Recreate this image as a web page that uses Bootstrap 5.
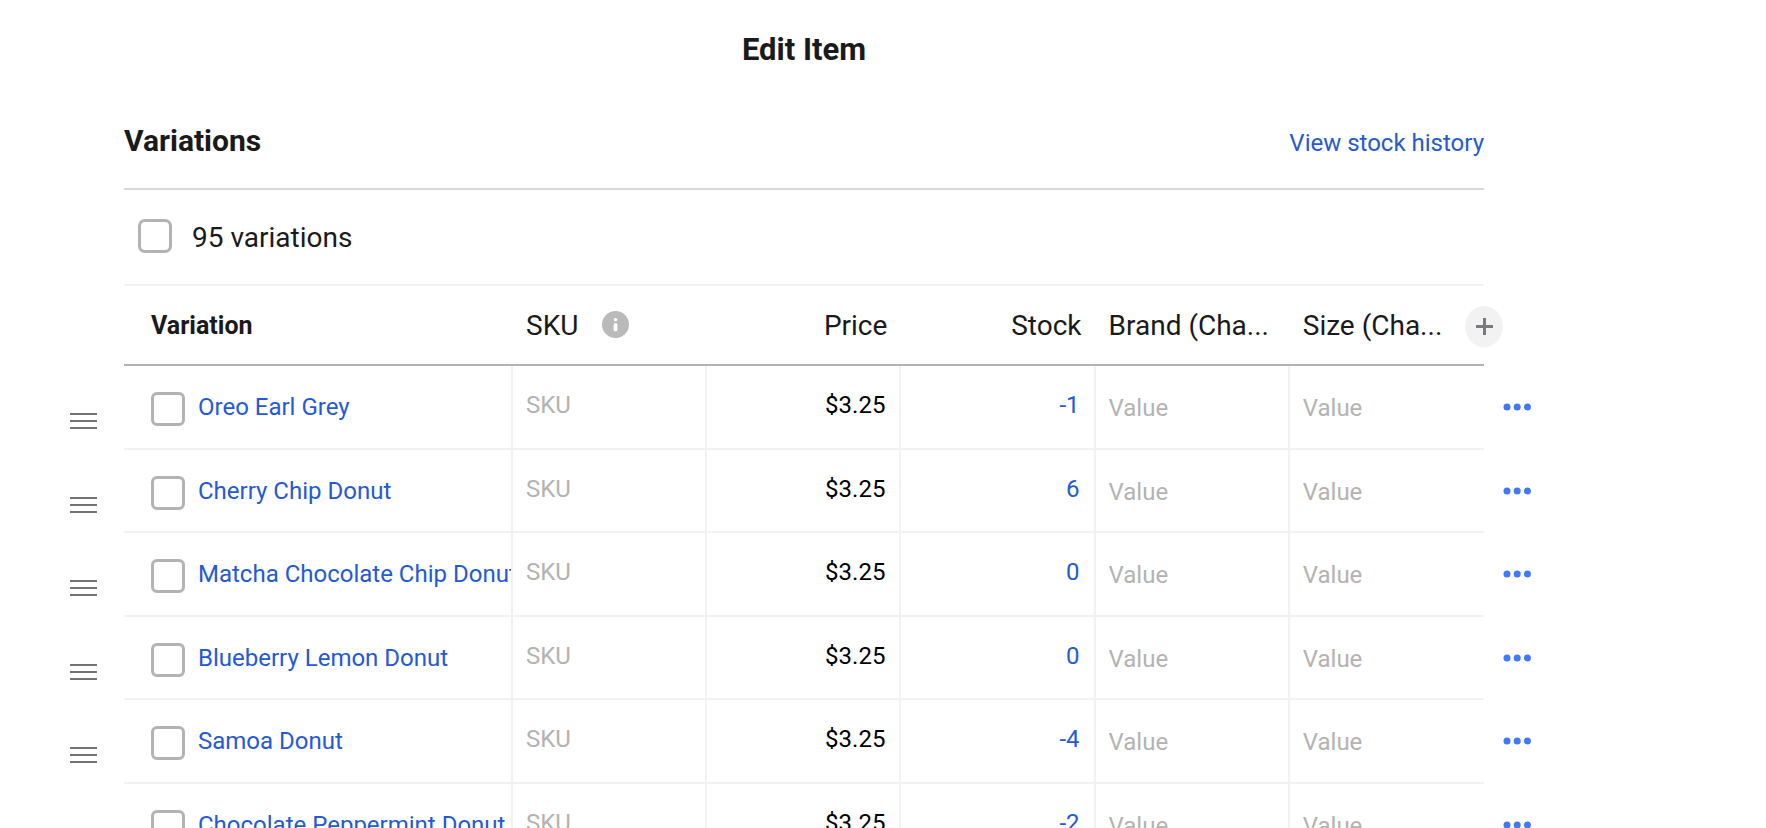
<!DOCTYPE html>
<html lang="en">
<head>
<meta charset="utf-8">
<meta name="viewport" content="width=device-width, initial-scale=1">
<title>Edit Item</title>
<link href="https://cdn.jsdelivr.net/npm/bootstrap@5.3.0/dist/css/bootstrap.min.css" rel="stylesheet">
<style>
  :root { --ink: #1a1a1a; --link: #2559d6; --muted: #b3b3b3; --rule: #f2f2f2; }
  body { font-family: Roboto, "Liberation Sans", sans-serif; font-size: 24px; line-height: 32px; color: var(--ink); }
  a { color: var(--link); }
  .editor { padding: 0 124px; margin-right: 158px; }
  .page-title { font-size: 31px; line-height: 40px; padding: 30px 0; }
  .section-head { height: 90px; padding-top: 21px; border-bottom: 2px solid #d9d9d9; }
  .section-title { font-size: 30px; line-height: 40px; }
  .section-link { padding-top: 6px; }
  .count-row { height: 96px; padding: 0 14px; gap: 20px; border-bottom: 2px solid var(--rule); font-size: 28px; }
  .form-check-input { width: 34px; height: 34px; margin: 0; border: 3px solid var(--muted); border-radius: 7px; flex: none; }
  .count-row .form-check-input { margin-bottom: 2px; }
  .count-row label { padding-top: 2px; }

  /* The table reaches past the section on both sides to hold the drag handles and row menus. */
  .grid-wrap { margin: 0 -47px 0 -54px; }
  .var-grid { width: 100%; table-layout: fixed; border-collapse: separate; border-spacing: 0; }
  .var-grid th, .var-grid td { padding: 0; vertical-align: top; }
  .col-grip { width: 54px; }
  .col-name { width: 389px; }
  .col-menu { width: 47px; }
  .var-grid thead th { height: 80px; padding: 2px 14px 0 13px; vertical-align: middle; font-size: 28px; font-weight: 400; border-bottom: 2px solid var(--muted); white-space: nowrap; }
  .var-grid thead th.name-head { font-size: 25px; font-weight: 700; padding-left: 27px; }
  .var-grid thead .bare { border: 0; padding: 0; }
  .var-grid tbody tr { height: 84px; }
  .var-grid tbody tr:nth-child(even) { height: 83px; }
  .cell { border-bottom: 2px solid var(--rule); border-right: 2px solid var(--rule); }
  .cell.last { border-right: 0; }
  .name-inner { height: 81px; padding-left: 27px; gap: 13px; overflow: hidden; white-space: nowrap; }
  .name-inner .form-check-input { margin-top: 4px; }
  .cell input.form-control { height: 77px; padding: 0 14px 0 13px; border: 0; border-radius: 0; background: transparent; font-size: 24px; line-height: 32px; color: #000; }
  .cell input.form-control::placeholder { color: var(--muted); opacity: 1; }
  .cell.attr input.form-control { height: 81px; padding-top: 2px; }
  .stock { height: 77px; padding-right: 14px; }
  .dots { height: 82px; }
  .plain { border: 0; background: none; padding: 0; display: block; }
  .plain svg { display: block; }
  .plain.grip { padding-top: 47px; cursor: grab; }
  .plain.add { position: absolute; right: -19px; top: 50%; margin-top: -19px; width: 38px; height: 41px; border-radius: 50%; background: #f2f2f2; }
</style>
</head>
<body>
<main class="editor">
  <h1 class="page-title fw-bold text-center m-0">Edit Item</h1>
  <section>
    <div class="section-head d-flex justify-content-between">
      <h2 class="section-title fw-bold m-0">Variations</h2>
      <a href="#" class="section-link text-decoration-none">View stock history</a>
    </div>
    <div class="count-row d-flex align-items-center">
      <input class="form-check-input" type="checkbox" id="all">
      <label for="all">95 variations</label>
    </div>
    <div class="grid-wrap">
      <table class="var-grid">
        <colgroup><col class="col-grip"><col class="col-name"><col><col><col><col><col><col class="col-menu"></colgroup>
        <thead>
          <tr>
            <th class="bare"></th>
            <th class="name-head" scope="col">Variation</th>
            <th scope="col"><div class="d-flex align-items-center">SKU
              <button type="button" class="plain ms-4" aria-label="About SKU"><svg width="27" height="30" viewBox="0 0 27 30"><circle cx="13.500" cy="13.500" r="13.500" fill="#bababa"/><circle cx="13.500" cy="8.800" r="1.800" fill="#fff"/><path d="M13.500 14v4.500" stroke="#fff" stroke-width="3.800" stroke-linecap="round"/></svg></button></div></th>
            <th class="text-end" scope="col">Price</th>
            <th class="text-end" scope="col">Stock</th>
            <th scope="col">Brand (Cha...</th>
            <th class="position-relative" scope="col">Size (Cha...
              <button type="button" class="plain add" aria-label="Add attribute"><svg class="mx-auto" width="17" height="17" viewBox="0 0 17 17" stroke="#777b7d" stroke-width="3"><path d="M8.500 0v17M0 8.500h17"/></svg></button></th>
            <th class="bare"></th>
          </tr>
        </thead>
        <tbody id="rows"></tbody>
      </table>
    </div>
  </section>
</main>
<script src="https://cdn.jsdelivr.net/npm/bootstrap@5.3.0/dist/js/bootstrap.bundle.min.js"></script>
<script>
  const variations = [
    ["Oreo Earl Grey", "-1"],
    ["Cherry Chip Donut", "6"],
    ["Matcha Chocolate Chip Donut", "0"],
    ["Blueberry Lemon Donut", "0"],
    ["Samoa Donut", "-4"],
    ["Chocolate Peppermint Donut", "-2"]
  ];
  document.getElementById("rows").innerHTML = variations.map(([name, stock]) => `
    <tr>
      <td><button type="button" class="plain grip" aria-label="Reorder ${name}"><svg width="27" height="16" viewBox="0 0 27 16" fill="#737373"><path d="M0 0h27v2H0zM0 7h27v2H0zM0 14h27v2H0z"/></svg></button></td>
      <td class="cell"><div class="name-inner d-flex align-items-center"><input class="form-check-input" type="checkbox" aria-label="Select ${name}"><a href="#" class="text-decoration-none">${name}</a></div></td>
      <td class="cell"><input class="form-control" type="text" placeholder="SKU" aria-label="SKU for ${name}"></td>
      <td class="cell"><input class="form-control text-end" type="text" value="$3.25" aria-label="Price of ${name}"></td>
      <td class="cell"><div class="stock d-flex align-items-center justify-content-end"><a href="#" class="text-decoration-none">${stock}</a></div></td>
      <td class="cell attr"><input class="form-control" type="text" placeholder="Value" aria-label="Brand of ${name}"></td>
      <td class="cell attr last"><input class="form-control" type="text" placeholder="Value" aria-label="Size of ${name}"></td>
      <td><div class="dots d-flex align-items-center justify-content-end"><button type="button" class="plain" aria-label="Actions for ${name}"><svg width="28" height="8" viewBox="0 0 28 8" fill="#4078f5"><circle cx="4" cy="4" r="3.500"/><circle cx="14.200" cy="4" r="3.500"/><circle cx="24.400" cy="4" r="3.500"/></svg></button></div></td>
    </tr>`).join("");
</script>
</body>
</html>
